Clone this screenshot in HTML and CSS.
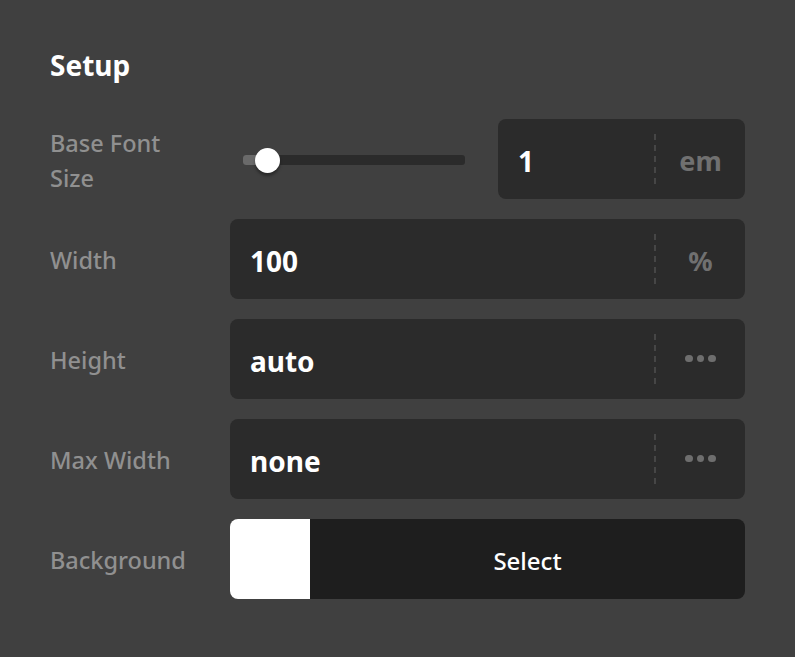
FILE: index.html
```html
<!DOCTYPE html>
<html>
<head>
<meta charset="utf-8">
<link rel="stylesheet" href="styles.css">
</head>
<body>
<div class="panel">
  <h2 class="title">Setup</h2>
  <div class="rows">
    <div class="label">Base Font<br>Size</div>
    <div class="ctrl split">
      <div class="slider">
        <div class="track"><div class="fill"></div><div class="thumb"></div></div>
      </div>
      <div class="box small">
        <span class="value">1</span>
        <span class="unit">em</span>
      </div>
    </div>

    <div class="label">Width</div>
    <div class="box">
      <span class="value">100</span>
      <span class="unit">%</span>
    </div>

    <div class="label">Height</div>
    <div class="box">
      <span class="value">auto</span>
      <span class="unit"><span class="dots"><i></i><i></i><i></i></span></span>
    </div>

    <div class="label">Max Width</div>
    <div class="box">
      <span class="value">none</span>
      <span class="unit"><span class="dots"><i></i><i></i><i></i></span></span>
    </div>

    <div class="label">Background</div>
    <div class="picker">
      <div class="swatch"></div>
      <div class="select">Select</div>
    </div>
  </div>
</div>
</body>
</html>
```

FILE: styles.css
```css
html, body {
  margin: 0;
  padding: 0;
  background: #404040;
}
body {
  font-family: "Noto Sans", "Open Sans", sans-serif;
  width: 795px;
  height: 657px;
  overflow: hidden;
}
.panel {
  padding: 45px 50px 0 50px;
}
.title {
  margin: 0 0 34px 0;
  font-size: 28px;
  font-weight: 700;
  color: #ffffff;
  line-height: 40px;
}
.rows {
  display: grid;
  grid-template-columns: 180px 1fr;
  grid-auto-rows: 80px;
  row-gap: 20px;
  align-items: center;
}
.label {
  color: #909090;
  font-size: 23.5px;
  font-weight: 500;
  line-height: 35px;
  padding-top: 3px;
}
.ctrl.split {
  display: flex;
  align-items: center;
  gap: 33px;
  height: 80px;
}
.slider {
  flex: 1;
  padding-left: 13px;
  padding-top: 2px;
}
.track {
  position: relative;
  height: 10px;
  border-radius: 3px;
  background: #2b2b2b;
}
.fill {
  width: 24px;
  height: 10px;
  background: #6a6a6a;
  border-radius: 3px 0 0 3px;
}
.thumb {
  position: absolute;
  left: 12px;
  top: -7px;
  width: 25px;
  height: 25px;
  border-radius: 50%;
  background: #ffffff;
  box-shadow: 0 3px 3px rgba(0,0,0,0.35);
}
.box {
  height: 80px;
  background: #2b2b2b;
  border-radius: 8px;
  display: flex;
  align-items: center;
  box-sizing: border-box;
}
.box.small {
  width: 247px;
}
.value {
  flex: 1;
  padding-left: 20px;
  padding-top: 4px;
  color: #ffffff;
  font-size: 28px;
  font-weight: 700;
}
.unit {
  width: 91px;
  height: 50px;
  box-sizing: border-box;
  border-left: 2px dashed #464646;
  display: flex;
  align-items: center;
  justify-content: center;
  padding-top: 3px;
  color: #707070;
  font-size: 27px;
  font-weight: 700;
}
.dots {
  display: flex;
  gap: 4px;
  margin-top: -4px;
}
.dots i {
  display: block;
  width: 7.5px;
  height: 7.5px;
  border-radius: 50%;
  background: #6e6e6e;
}
.picker {
  height: 80px;
  display: flex;
  border-radius: 8px;
  overflow: hidden;
}
.swatch {
  width: 80px;
  background: #ffffff;
}
.select {
  flex: 1;
  background: #1e1e1e;
  color: #ffffff;
  font-size: 24px;
  font-weight: 500;
  display: flex;
  align-items: center;
  justify-content: center;
  padding-top: 2px;
}
```
